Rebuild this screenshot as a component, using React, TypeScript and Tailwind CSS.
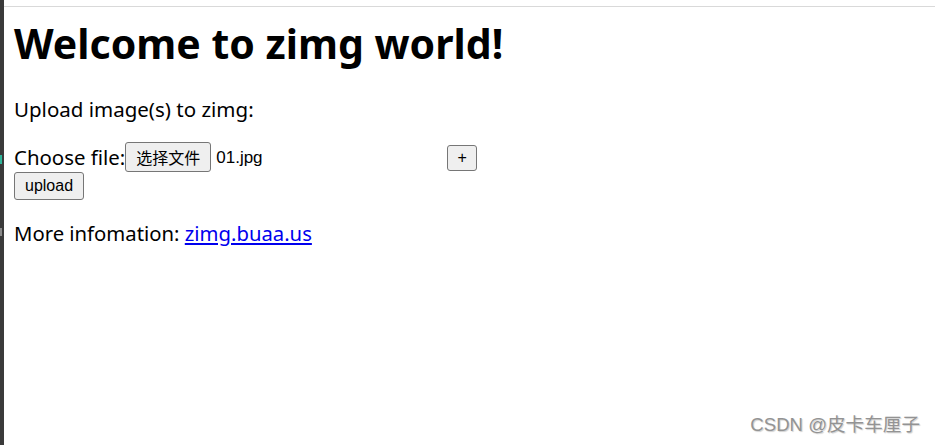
import React from "react";

export default function App() {
  return (
    <div className="relative flex h-[445px] w-[935px] overflow-hidden bg-white text-black">
      <div className="flex w-[4px] flex-col bg-[#3a3a3a]">
        <div className="h-[155px]" />
        <div className="h-[9px] w-[2px] bg-[#2fb59a]" />
        <div className="h-[64px]" />
        <div className="h-[8px] w-[2px] bg-[#8a8a8a]" />
      </div>
      <div className="flex-1">
        <div className="h-[6px]" />
        <div className="h-px bg-[#d9d9d9]" />
        <div className="pl-[10px] font-['Noto_Sans','Noto_Sans_CJK_SC',sans-serif]">
          <h1 className="mt-[9px] h-[54px] text-[41px] font-bold leading-[54px]">
            Welcome to zimg world!
          </h1>
          <p className="mt-[25px] h-[28px] text-[20.5px] leading-[28px]">
            Upload image(s) to zimg:
          </p>
          <div className="mt-[19px] flex h-[30px] items-start">
            <span className="text-[20.4px] leading-[30px]">Choose file:</span>
            <div className="flex w-[317px] items-start">
              <button className="box-border h-[30px] rounded-[3px] border border-[#767676] bg-[#efefef] px-[10px] font-['Noto_Sans_CJK_SC',sans-serif] text-[16px] leading-[26px]">
                选择文件
              </button>
              <span className="ml-[5px] font-['Liberation_Sans',Arial,sans-serif] text-[17px] leading-[31px]">
                01.jpg
              </span>
            </div>
            <button className="ml-[5px] mt-[3px] box-border h-[26px] w-[30px] rounded-[3px] border border-[#767676] bg-[#efefef] font-['Liberation_Sans',Arial,sans-serif] text-[16px] leading-[22px]">
              +
            </button>
          </div>
          <div className="flex">
            <button className="box-border h-[28px] rounded-[3px] border border-[#767676] bg-[#efefef] px-[10px] font-['Liberation_Sans',Arial,sans-serif] text-[16px] leading-[24px]">
              upload
            </button>
          </div>
          <p className="mt-[19px] h-[28px] text-[20.3px] leading-[28px]">
            More infomation:{" "}
            <a href="#" className="text-[#0000ee] underline">
              zimg.buaa.us
            </a>
          </p>
        </div>
      </div>
      <div className="absolute bottom-[8px] right-[15px] font-['Liberation_Sans','Noto_Sans_CJK_SC',sans-serif] text-[18.6px] leading-[24px] text-[#939393] [text-shadow:1px_1px_1px_#d0d0d0]">
        CSDN @皮卡车厘子
      </div>
    </div>
  );
}
